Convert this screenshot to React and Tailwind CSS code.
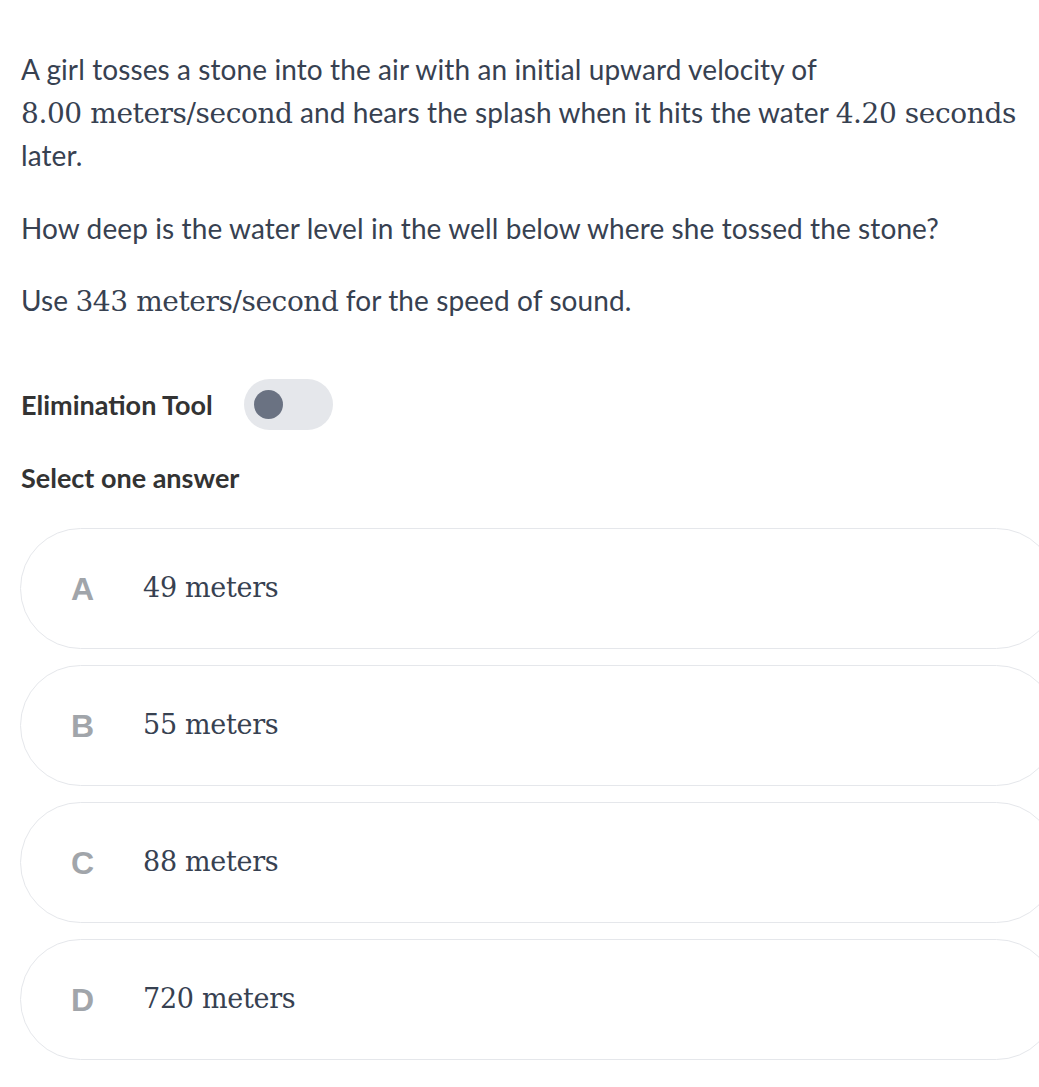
import React from 'react';

const options = [
  { letter: 'A', text: '49 meters' },
  { letter: 'B', text: '55 meters' },
  { letter: 'C', text: '88 meters' },
  { letter: 'D', text: '720 meters' },
];

// KaTeX-style inline math
function M({ children }) {
  return (
    <span className="whitespace-nowrap font-['DejaVu_Serif',serif] text-[28px] leading-none tracking-[-0.4px]">{children}</span>
  );
}

export default function App() {
  return (
    <div className="w-full min-h-[1087px] overflow-hidden bg-white font-['Lato',sans-serif] text-[#374151]">
      <div className="pl-[21px] pt-[48px]">
        <p className="text-[28px] leading-[43px] tracking-[0.1px]">
          A girl tosses a stone into the air with an initial upward velocity of <M>8.00 meters/second</M> and hears the
          splash when it hits the water <M>4.20 seconds</M> later.
        </p>
        <p className="mt-[30px] text-[28px] leading-[43px] tracking-[0.1px]">
          How deep is the water level in the well below where she tossed the stone?
        </p>
        <p className="mt-[29px] text-[28px] leading-[43px] tracking-[0.1px]">
          Use <M>343 meters/second</M> for the speed of sound.
        </p>

        {/* Elimination toggle */}
        <div className="mt-[57px] flex items-center gap-[31px]">
          <span className="text-[27px] font-bold text-[#333] leading-[30px]">Elimination Tool</span>
          <div className="w-[89px] h-[51px] rounded-full bg-gray-200 flex items-center pl-[10px]">
            <div className="w-[29px] h-[29px] rounded-full bg-gray-500" />
          </div>
        </div>

        <div className="mt-[33px] text-[27px] font-bold text-[#333] leading-[30px]">Select one answer</div>

        <div className="mt-[35px] flex flex-col gap-[16px] -ml-px">
          {options.map((o) => (
            <div
              key={o.letter}
              className="w-[1037px] h-[121px] shrink-0 rounded-full border border-gray-200 flex items-center"
            >
              <span className="w-[122px] text-center pl-[1px] font-['Liberation_Sans',sans-serif] font-bold text-[32px] text-[#a1a5aa]">
                {o.letter}
              </span>
              <span className="font-['DejaVu_Serif',serif] text-[27px] tracking-[-0.3px] text-[#374151]">{o.text}</span>
            </div>
          ))}
        </div>
      </div>
    </div>
  );
}
